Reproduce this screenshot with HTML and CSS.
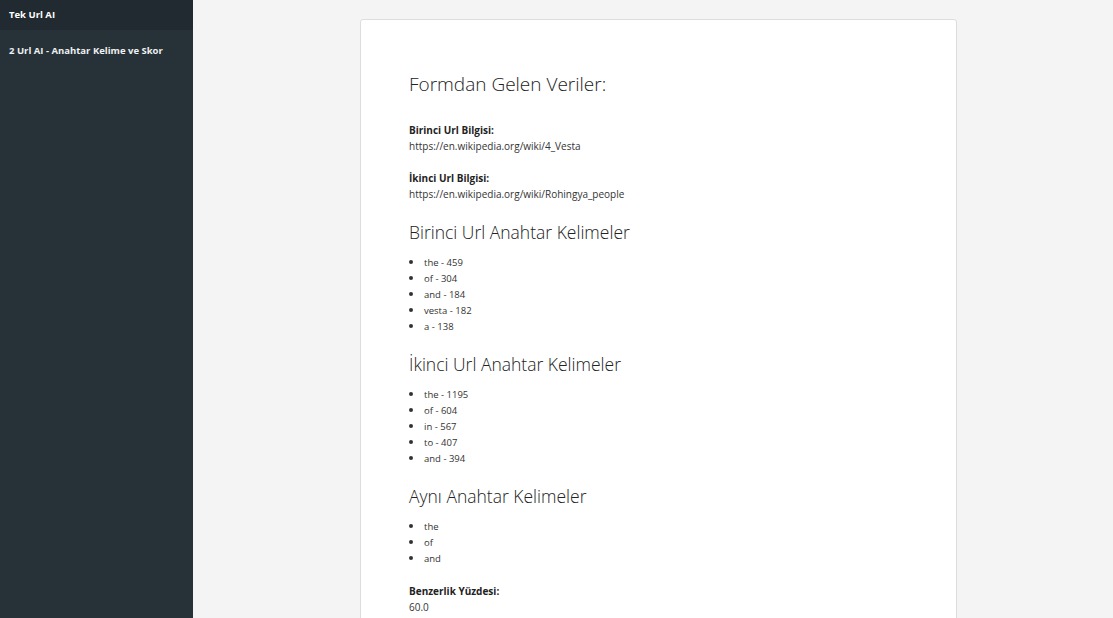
FILE: index.html
```html
<!DOCTYPE html>
<html lang="tr">
<head>
<meta charset="utf-8">
<title>Url AI</title>
<link rel="stylesheet" href="styles.css">
</head>
<body>
<nav class="sidebar">
  <a class="nav-item nav-active" href="#">Tek Url AI</a>
  <a class="nav-item" href="#">2 Url AI - Anahtar Kelime ve Skor</a>
</nav>
<main class="main">
  <section class="card">
    <h2 class="title">Formdan Gelen Veriler:</h2>
    <div class="field">
      <div class="label">Birinci Url Bilgisi:</div>
      <div class="value">https://en.wikipedia.org/wiki/4_Vesta</div>
    </div>
    <div class="field">
      <div class="label">İkinci Url Bilgisi:</div>
      <div class="value">https://en.wikipedia.org/wiki/Rohingya_people</div>
    </div>
    <h3 class="subtitle">Birinci Url Anahtar Kelimeler</h3>
    <ul class="list">
      <li>the - 459</li>
      <li>of - 304</li>
      <li>and - 184</li>
      <li>vesta - 182</li>
      <li>a - 138</li>
    </ul>
    <h3 class="subtitle">İkinci Url Anahtar Kelimeler</h3>
    <ul class="list">
      <li>the - 1195</li>
      <li>of - 604</li>
      <li>in - 567</li>
      <li>to - 407</li>
      <li>and - 394</li>
    </ul>
    <h3 class="subtitle">Aynı Anahtar Kelimeler</h3>
    <ul class="list">
      <li>the</li>
      <li>of</li>
      <li>and</li>
    </ul>
    <div class="field">
      <div class="label">Benzerlik Yüzdesi:</div>
      <div class="value">60.0</div>
    </div>
  </section>
</main>
</body>
</html>
```
FILE: styles.css
```css
html, body {
  margin: 0;
  padding: 0;
  height: 100%;
  overflow: hidden;
}
body {
  display: flex;
  background: #f4f4f4;
  font-family: "Open Sans", "Noto Sans", sans-serif;
  color: #333;
}
.sidebar {
  width: 193px;
  flex: none;
  background: #263238;
  display: flex;
  flex-direction: column;
  min-height: 100vh;
}
.nav-item {
  display: block;
  color: #eef0f1;
  text-decoration: none;
  font-size: 9.5px;
  font-weight: 700;
  line-height: 30px;
  padding-left: 9px;
}
.nav-active {
  background: #212a30;
  color: #ffffff;
}
.nav-item + .nav-item {
  padding-top: 6px;
}
.main {
  flex: 1;
  padding: 19px 0 0 167px;
}
.card {
  width: 497px;
  background: #fff;
  border: 1px solid #dddddd;
  border-radius: 3px;
  padding: 52px 50px 40px 48px;
  min-height: 700px;
}
.title {
  margin: 0 0 25px;
  font-size: 19px;
  font-weight: 300;
  line-height: 25px;
  color: #222;
}
.subtitle {
  margin: 18px 0 10px;
  font-size: 17.5px;
  font-weight: 300;
  line-height: 24px;
  color: #222;
}
.field {
  font-size: 10px;
  line-height: 16px;
  margin-bottom: 16px;
}
.label {
  font-weight: 700;
  color: #222;
}
.value {
  color: #333;
}
.list {
  margin: 0 0 17px;
  padding-left: 15px;
  font-size: 9.5px;
  line-height: 16px;
  color: #333;
}
.list li {
  height: 16px;
}
.list li::marker {
  font-size: 12px;
  color: #333;
}
```
